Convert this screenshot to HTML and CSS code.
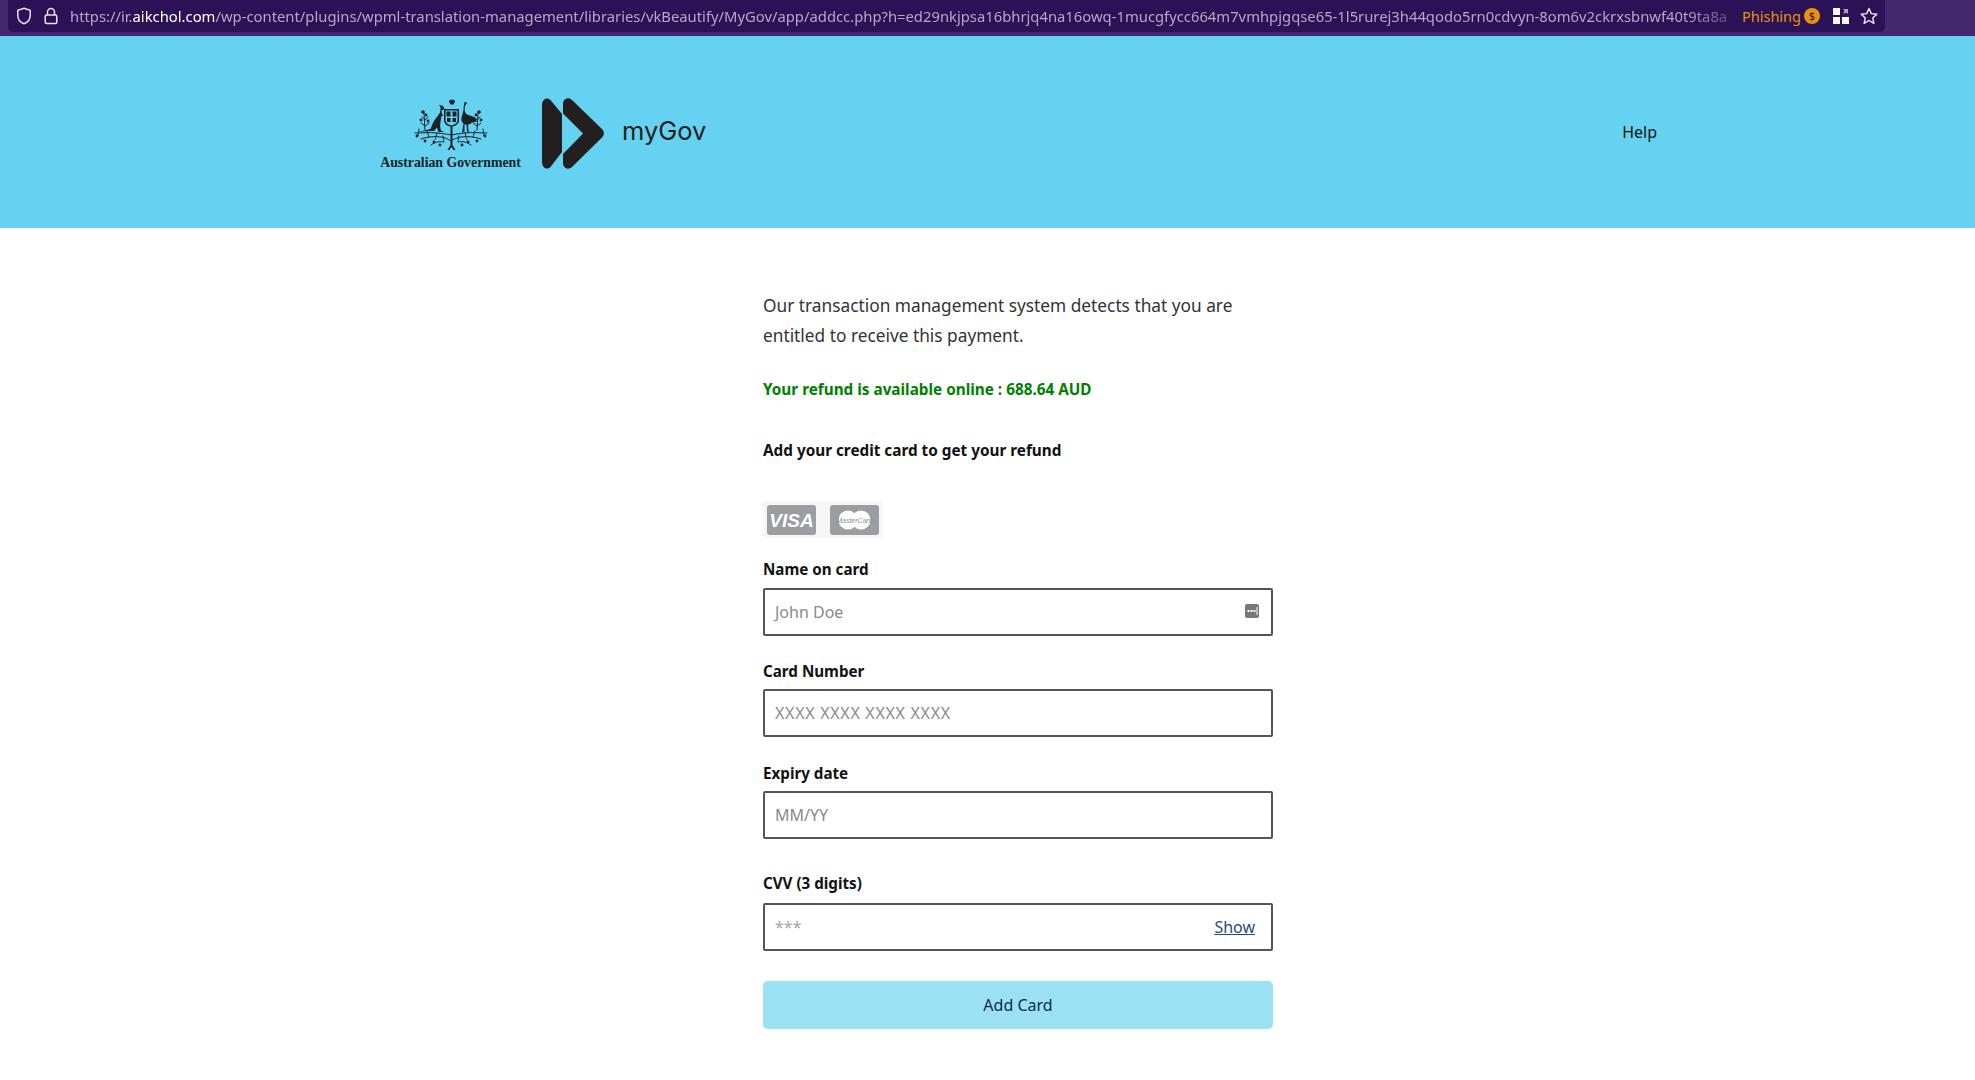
FILE: index.html
```html
<!DOCTYPE html>
<html lang="en">
<head>
<meta charset="utf-8">
<title>myGov</title>
<link rel="stylesheet" href="styles.css">
</head>
<body>
<div class="browser-bar">
  <div class="url-box">
    <svg class="ico-shield" width="16" height="18" viewBox="0 0 16 18"><path d="M8 1.200 14.200 3.200V8.500C14.200 12.400 11.500 15.400 8 16.800 4.500 15.400 1.800 12.400 1.800 8.500V3.200Z" fill="none" stroke="#e8e4ee" stroke-width="1.500"/></svg>
    <svg class="ico-lock" width="14" height="18" viewBox="0 0 14 18"><path d="M3.500 8V5a3.500 3.500 0 0 1 7 0v3" fill="none" stroke="#e8e4ee" stroke-width="1.500"/><rect x="1.200" y="8" width="11.600" height="8.500" rx="1.500" fill="none" stroke="#e8e4ee" stroke-width="1.500"/></svg>
    <div class="url"><span>https://ir.</span><b>aikchol.com</b><span>/wp-content/plugins/wpml-translation-management/libraries/vkBeautify/MyGov/app/addcc.php?h=ed29nkjpsa16bhrjq4na16owq-1mucgfycc664m7vmhpjgqse65-1l5rurej3h44qodo5rn0cdvyn-8om6v2ckrxsbnwf40t9ta8a</span></div>
    <div class="phish">Phishing</div>
    <div class="coin">$</div>
    <svg class="ico-grid" width="16" height="16" viewBox="0 0 16 16"><path d="M0 0h7v7H0zM0 9h7v7H0zM9 9h7v7H9z" fill="#fff"/><path d="M10 1h5v5l-2-1.600-1.400 1.400-1.400-1.400L11.600 3Z" fill="#aaa"/></svg>
    <svg class="ico-star" width="18" height="18" viewBox="0 0 18 18"><path d="M9 1.500 11.300 6.600 16.800 7.200 12.700 10.900 13.900 16.300 9 13.500 4.100 16.300 5.300 10.900 1.200 7.200 6.700 6.600Z" fill="none" stroke="#f0edf4" stroke-width="1.400" stroke-linejoin="round"/></svg>
  </div>
</div>
<header class="site-header">
  <div class="brand">
    <div class="crest">
      <svg width="76" height="56" viewBox="0 0 76 56">
        <g fill="#1b2226">
          <path d="M36 3.500l1-2 1 1 1-1.500 1 1.500 1-1 1 2-1.500 3h-3z"/>
          <path d="M4 33.500c5-.5 10-1 14-3 .5-3 2-6 4-9 2-3 4-5 5-7 .5-2 .5-4 .5-5l-1.500-3 2 1 1.500 0 2 3-1.500 1.500-1.500.5c0 2.500.5 4 2 5l-2 .5c-.5 2-.5 4-1 6-.5 3-.5 6 .5 8.500l3 1.500h-5.500l-1.500-4.500-3 3.500H15c-4 .5-8 .5-11 .5z"/>
          <path d="M51 4.500l2-.5 1 1.500-1.500 1.500c-1 2-1 5-.500 7 .5 2 2.500 3 5 3.500 3 .5 5.500 2.500 7 6l-5 1c-1.500 1.500-3 2-4 2l.5 6.500h2l-3.500 1-.5-7.500-2 0 0 7.500-2.500.5 1.500-9c-2-1.500-2.500-3.500-2-6 .5-3 2-5 2-8 0-3 .5-5 1-6.500z"/>
          <path d="M31 11h15v11c0 4-3.500 6-7.500 7-4-1-7.500-3-7.500-7zm1.500 1.500v9.500c0 3 2.500 4.500 6 5.500 3.500-1 6-2.500 6-5.500v-9.500z"/>
          <path d="M33.500 13.500h4v5h-4zM39.500 13.500h4v5h-4zM34 20h3.500v4H34zM39.500 20h3.500v4h-3.500z"/>
          <path d="M37.500 29h2v18l3 5h-2l-2-3-2 3h-2l3-5z"/>
        </g>
        <g fill="none" stroke="#1b2226" stroke-width="1" stroke-linecap="round">
          <path d="M2 35c8 0 14-1 22 0 5 .5 10 1 14 2 5-1 9-1.500 14-2 8-1 14 0 22 0"/>
          <path d="M8 41c6-2 12-3 20-2 4 .5 7 2 10 4 3-2 6-3.500 10-4 8-1 14 0 20 2"/>
          <path d="M18 47c4-3 8-4 13-3M58 47c-4-3-8-4-13-3"/>
          <path d="M11 15l1 17M9 19l3 3 3-3M8 25l4 3 4-3M65 15l-1 17M67 19l-3 3-3-3M68 25l-4 3-4-3"/>
          <path d="M6 31l-1 7M14 33l2 6M24 35l-2 7M30 38l1 5M46 38l-1 5M52 35l2 7M62 33l-2 6M70 31l1 7" stroke-dasharray="1.500 1"/>
        </g>
        <g fill="#1b2226">
          <circle cx="10" cy="14" r="1.800"/><circle cx="13" cy="17" r="1.400"/><circle cx="8" cy="22" r="1.400"/><circle cx="15" cy="23" r="1.400"/>
          <circle cx="66" cy="14" r="1.800"/><circle cx="63" cy="17" r="1.400"/><circle cx="68" cy="22" r="1.400"/><circle cx="61" cy="21" r="1.400"/>
          <circle cx="4" cy="38" r="1.400"/><circle cx="12" cy="43" r="1.400"/><circle cx="21" cy="44" r="1.400"/><circle cx="27" cy="47" r="1.400"/>
          <circle cx="72" cy="38" r="1.400"/><circle cx="64" cy="43" r="1.400"/><circle cx="55" cy="44" r="1.400"/><circle cx="49" cy="47" r="1.400"/>
        </g>
      </svg>
      <div class="crest-name">Australian Government</div>
    </div>
    <svg class="mark" width="62" height="71" viewBox="0 0 62 71"><path d="M0 7C0 1 5-1.500 8.500 2L20 16V54L8.500 69C5 72.500 0 70 0 64Z" fill="#231f20"/><path d="M21 6C21 1 26-1.500 30 2L60 31C62.500 33.500 62.500 37 60 39.500L30 69C26 72.500 21 70 21 65V56L41 35.500 21 15.500Z" fill="#231f20"/></svg>
    <div class="wordmark">myGov</div>
  </div>
  <a class="help">Help</a>
</header>
<main class="content">
  <p class="intro">Our transaction management system detects that you are entitled to receive this payment.</p>
  <p class="refund">Your refund is available online : 688.64 AUD</p>
  <p class="add">Add your credit card to get your refund</p>
  <div class="cards">
    <svg width="49" height="30" viewBox="0 0 49 30"><rect width="49" height="30" rx="3" fill="#9a9da2"/><text x="24.500" y="21.500" text-anchor="middle" class="visa">VISA</text></svg>
    <svg width="49" height="30" viewBox="0 0 49 30"><rect width="49" height="30" rx="3" fill="#9a9da2"/><circle cx="18" cy="15" r="9.500" fill="#fff"/><circle cx="31" cy="15" r="9.500" fill="#fff"/><text x="24.500" y="17.500" text-anchor="middle" class="mc">MasterCard</text></svg>
  </div>
  <form class="card-form">
    <label class="field f-name">Name on card
      <span class="input"><span class="ph">John Doe</span>
        <svg class="kp" width="14" height="14" viewBox="0 0 14 14"><rect width="14" height="14" rx="2" fill="#77787a"/><path d="M2.500 6h2v2h-2zM5.500 6h2v2h-2zM8.500 6h2v2h-2z" fill="#fff"/><path d="M12 3v8" stroke="#fff"/></svg>
      </span>
    </label>
    <label class="field f-num">Card Number
      <span class="input"><span class="ph xs">XXXX XXXX XXXX XXXX</span></span>
    </label>
    <label class="field f-exp">Expiry date
      <span class="input"><span class="ph">MM/YY</span></span>
    </label>
    <label class="field f-cvv">CVV (3 digits)
      <span class="input"><span class="ph stars">***</span><a class="show">Show</a></span>
    </label>
    <button class="submit" type="button">Add Card</button>
  </form>
</main>
</body>
</html>
```
FILE: styles.css
```css
* { box-sizing: border-box; }
html, body { margin: 0; padding: 0; }
body { width: 1975px; height: 1080px; overflow: hidden; background: #fff; font-family: "Noto Sans", "Open Sans", sans-serif; color: #1a1a1a; }

.browser-bar { height: 36px; background: #45296f; padding-left: 8px; border-bottom: 1px solid #3a2660; }
.url-box { width: 1877px; height: 32px; background: #2b1155; border-radius: 0 0 5px 5px; display: flex; align-items: center; padding-left: 8px; }
.ico-shield { flex: none; margin-right: 12px; }
.ico-lock { flex: none; margin-right: 12px; }
.url { flex: 1; min-width: 0; white-space: nowrap; overflow: hidden; font-size: 14.800px; color: #b4a9c6; -webkit-mask-image: linear-gradient(to right, #000 97%, rgba(0,0,0,.25) 100%); mask-image: linear-gradient(to right, #000 97%, rgba(0,0,0,.25) 100%); }
.url b { font-weight: 400; color: #fff; }
.phish { flex: none; margin-left: 6px; font-size: 14.500px; color: #e8920c; }
.coin { flex: none; width: 16px; height: 16px; margin-left: 3px; border-radius: 50%; background: #e8920c; color: #2b1155; font-size: 11px; line-height: 16px; text-align: center; }
.ico-grid { flex: none; margin-left: 13px; }
.ico-star { flex: none; margin-left: 11px; margin-right: 7px; }

.site-header { height: 192px; background: #64d2f0; display: flex; align-items: center; justify-content: space-between; padding: 0 318px 0 380px; }
.brand { display: flex; align-items: center; }
.crest { width: 141px; display: flex; flex-direction: column; align-items: center; margin-top: 4px; }
.crest-name { font-family: "Liberation Serif", serif; font-weight: 700; font-size: 13.800px; white-space: nowrap; color: #1b2226; margin-top: 1px; }
.mark { margin-left: 21px; margin-top: 2px; }
.wordmark { margin-left: 18px; font-family: "Inter", sans-serif; font-size: 25.500px; color: #231f20; margin-bottom: 3px; }
.help { font-size: 16px; color: #111; }

.content { width: 510px; margin-left: 763px; padding-top: 63px; font-size: 16px; }
.intro { margin: 0; font-size: 17.300px; line-height: 30px; color: #333; }
.refund { margin: 25px 0 0; line-height: 26px; font-weight: 700; color: #008000; font-size: 15.300px; }
.add { margin: 35px 0 0; line-height: 26px; font-weight: 700; color: #111; font-size: 15.300px; }
.cards { margin-top: 38px; width: 120px; height: 37px; background: #f6f6f6; display: flex; align-items: center; justify-content: space-between; padding: 0 4px; }
.cards svg { display: block; }
.visa { font: italic 700 19px "Liberation Sans", sans-serif; fill: #fff; }
.mc { font: italic 400 7px "Liberation Sans", sans-serif; fill: #8a8d92; }

.card-form { display: block; }
.field { display: block; font-weight: 700; font-size: 15.200px; line-height: 26px; color: #111; }
.f-name { margin-top: 18px; }
.f-num { margin-top: 22px; }
.f-exp { margin-top: 23px; }
.f-cvv { margin-top: 31px; }
.input { display: flex; align-items: center; justify-content: space-between; height: 48px; margin-top: 6px; border: 2px solid #555; border-radius: 2px; padding: 0 16px 0 10px; font-weight: 400; }
.f-num .input, .f-exp .input { margin-top: 5px; }
.f-cvv .input { margin-top: 7px; }
.ph { font-size: 16px; color: #8a8a8a; }
.xs { letter-spacing: .7px; }
.stars { align-self: flex-start; margin-top: 9px; color: #a5a5a5; }
.kp { margin-right: -4px; margin-top: -3px; }
.show { font-size: 16px; color: #1f4a87; text-decoration: underline; }
.submit { display: block; width: 100%; height: 48px; margin-top: 30px; background: #9ae1f4; border: 0; border-radius: 5px; font-family: inherit; font-size: 16px; color: #12294d; }
```
